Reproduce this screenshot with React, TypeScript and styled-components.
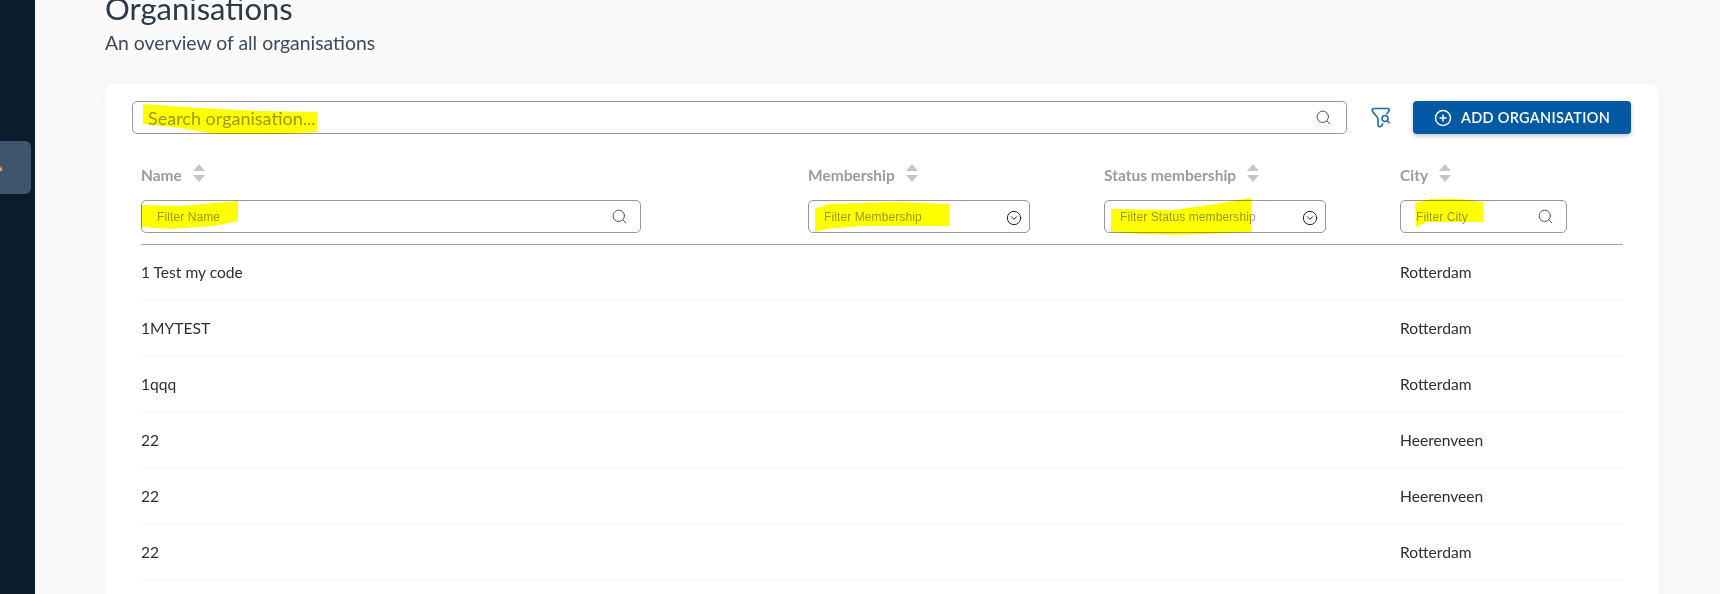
import { Fragment } from "react";
import { CircleChevronDown, CirclePlus, Search } from "lucide-react";
import styled, { createGlobalStyle } from "styled-components";

const GlobalStyle = createGlobalStyle`
  * {
    box-sizing: border-box;
  }
  html,
  body {
    margin: 0;
    height: 100%;
    overflow: hidden;
    background: #fafafb;
    font-family: Lato, "Liberation Sans", sans-serif;
  }
`;

const Page = styled.div`
  position: relative;
  display: flex;
  width: 1720px;
  height: 594px;
  overflow: hidden;
`;

const Sidebar = styled.aside`
  flex: 0 0 35px;
  padding: 141px 4px 0 0;
  background: #0b1c2c;
`;

const ActiveItem = styled.div`
  display: flex;
  align-items: center;
  height: 53px;
  padding-top: 2px;
  border-radius: 0 6px 6px 0;
  background: #3f556b;
`;

const ActiveGlyph = styled.span`
  width: 2px;
  height: 5px;
  background: linear-gradient(#b0607a 40%, #e8a63c 40%);
`;

const Main = styled.main`
  flex: 1;
  padding: 0 61px 0 70px;
`;

const Title = styled.h1`
  margin: -10px 0 0;
  color: #2b3a46;
  font-size: 31px;
  font-weight: 400;
  line-height: 36px;
`;

const Subtitle = styled.p`
  margin: 6px 0 0;
  color: #3c4a5a;
  font-size: 19.4px;
  line-height: 22px;
`;

const Card = styled.section`
  margin-top: 30px;
  padding: 17px 28px 60px 27px;
  border-radius: 8px;
  background: #fff;
  box-shadow: 0 0 16px rgba(30, 50, 70, 0.04);
`;

const Toolbar = styled.div`
  display: flex;
  align-items: center;
`;

const InputBox = styled.label<{ $width?: string }>`
  display: flex;
  align-items: center;
  width: ${(props) => props.$width || "100%"};
  height: 33px;
  border: 1px solid #97979d;
  border-radius: 5px;
  background: #fff;
`;

const SearchBox = styled(InputBox)`
  flex: 0 0 1215px;
  padding: 0 14px 0 15px;
`;

const TextInput = styled.input<{ $size?: "small" }>`
  flex: 1;
  min-width: 0;
  padding: 0;
  border: 0;
  outline: 0;
  background: transparent;
  color: #333;
  font-family: ${(props) =>
    props.$size === "small" ? '"Liberation Sans", sans-serif' : "Lato, sans-serif"};
  font-size: ${(props) => (props.$size === "small" ? "12px" : "18px")};
  letter-spacing: ${(props) => (props.$size === "small" ? "0.1px" : "0")};
  &::placeholder {
    color: #9a9a9a;
    opacity: 1;
  }
`;

const FilterButton = styled.button`
  display: flex;
  flex: 0 0 66px;
  align-items: center;
  justify-content: center;
  height: 33px;
  padding: 0 0 0 1px;
  border: 0;
  background: none;
`;

const AddButton = styled.button`
  display: flex;
  flex: 0 0 218px;
  align-items: center;
  justify-content: center;
  gap: 9px;
  height: 33px;
  padding: 0;
  border: 0;
  border-radius: 4px;
  background: #0459a5;
  box-shadow: 0 2px 4px rgba(0, 0, 0, 0.22);
  color: #fff;
  font-family: Lato, sans-serif;
  font-size: 14.5px;
  font-weight: 600;
  letter-spacing: 0.3px;
`;

const TableGrid = styled.div`
  display: grid;
  grid-template-columns: 667px 296px 296px 223px;
  margin: 0 8px 0 9px;
`;

const HeadCell = styled.div`
  padding-top: 29px;
  padding-bottom: 11px;
  border-bottom: 1px solid #a4a4a8;
`;

const HeadLabel = styled.div`
  display: flex;
  align-items: center;
  gap: 11px;
  height: 24px;
  margin-bottom: 13px;
  color: #9b9b9f;
  font-size: 15.5px;
  font-weight: 700;
`;

const SortCarets = styled.span`
  display: flex;
  flex-direction: column;
  gap: 4px;
  margin-top: -5px;
`;

const Caret = styled.i<{ $down?: boolean }>`
  display: block;
  width: 0;
  height: 0;
  border-right: 6px solid transparent;
  border-left: 6px solid transparent;
  border-bottom: ${(props) => (props.$down ? "0" : "7px solid #c6c6c8")};
  border-top: ${(props) => (props.$down ? "7px solid #c6c6c8" : "0")};
`;

const FilterBox = styled(InputBox)<{ $select?: boolean }>`
  padding: 0 ${(props) => (props.$select ? "7px" : "12px")} 0 15px;
`;

const SelectIcon = styled(CircleChevronDown)`
  flex: none;
  margin-top: 3px;
`;

const Cell = styled.div`
  display: flex;
  align-items: center;
  height: 56px;
  padding-bottom: 1px;
  border-bottom: 1px solid #f3f4f6;
  color: #2a2f3a;
  font-size: 15.6px;
`;

const MarkerLayer = styled.svg`
  position: absolute;
  top: 0;
  left: 0;
  mix-blend-mode: multiply;
  pointer-events: none;
`;

const columns = [
  { label: "Name", placeholder: "Filter Name", width: "500px", select: false },
  { label: "Membership", placeholder: "Filter Membership", width: "222px", select: true },
  { label: "Status membership", placeholder: "Filter Status membership", width: "222px", select: true },
  { label: "City", placeholder: "Filter City", width: "167px", select: false },
];

const rows = [
  { name: "1 Test my code", city: "Rotterdam" },
  { name: "1MYTEST", city: "Rotterdam" },
  { name: "1qqq", city: "Rotterdam" },
  { name: "22", city: "Heerenveen" },
  { name: "22", city: "Heerenveen" },
  { name: "22", city: "Rotterdam" },
];

const markers = [
  "143,104 200,108 260,111 317,112 317,132 280,134 215,134 180,128 143,124",
  "141,205 180,206 238,201 238,221 215,226 170,229 141,227",
  "815,209 828,204 894,202 949,204 949,226 862,226 826,229 815,232",
  "1111,209 1173,210 1209,205 1251,198 1251,232 1180,235 1142,234 1111,232",
  "1415,203 1430,199 1460,199 1483,202 1483,222 1427,222 1416,227",
];

function FunnelSearchIcon() {
  return (
    <svg width="20" height="22" viewBox="0 0 20 22" fill="none" stroke="#1f6aae" strokeWidth="1.6" strokeLinecap="round">
      <path d="M3 1.5h13.5c1.6 0 2.2 1.6 1.3 2.8l-2 2.4M3 1.5C1.4 1.5.6 3.2 1.6 4.4l4.8 6c.5.6.6 1.2.6 1.9v5.2c0 1.7 1.2 2.6 2.6 2 1.2-.5 2-1.4 1.9-2.6" />
      <circle cx="14" cy="11.5" r="3" />
      <path d="M16.2 13.8l2 2" />
    </svg>
  );
}

export default function App() {
  return (
    <Page>
      <GlobalStyle />
      <Sidebar>
        <ActiveItem>
          <ActiveGlyph />
        </ActiveItem>
      </Sidebar>
      <Main>
        <Title>Organisations</Title>
        <Subtitle>An overview of all organisations</Subtitle>
        <Card>
          <Toolbar>
            <SearchBox>
              <TextInput placeholder="Search organisation..." />
              <Search size={17} color="#4a5560" strokeWidth={1.4} />
            </SearchBox>
            <FilterButton>
              <FunnelSearchIcon />
            </FilterButton>
            <AddButton>
              <CirclePlus size={18} strokeWidth={2} />
              ADD ORGANISATION
            </AddButton>
          </Toolbar>
          <TableGrid>
            {columns.map((column) => (
              <HeadCell key={column.label}>
                <HeadLabel>
                  {column.label}
                  <SortCarets>
                    <Caret />
                    <Caret $down />
                  </SortCarets>
                </HeadLabel>
                <FilterBox $width={column.width} $select={column.select}>
                  <TextInput $size="small" placeholder={column.placeholder} />
                  {column.select ? (
                    <SelectIcon size={16} color="#222" strokeWidth={1.5} />
                  ) : (
                    <Search size={17} color="#4a5560" strokeWidth={1.4} />
                  )}
                </FilterBox>
              </HeadCell>
            ))}
            {rows.map((row, index) => (
              <Fragment key={index}>
                <Cell>{row.name}</Cell>
                <Cell />
                <Cell />
                <Cell>{row.city}</Cell>
              </Fragment>
            ))}
          </TableGrid>
        </Card>
      </Main>
      <MarkerLayer width="1720" height="594">
        {markers.map((points) => (
          <polygon key={points} points={points} fill="#ffff00" />
        ))}
      </MarkerLayer>
    </Page>
  );
}
